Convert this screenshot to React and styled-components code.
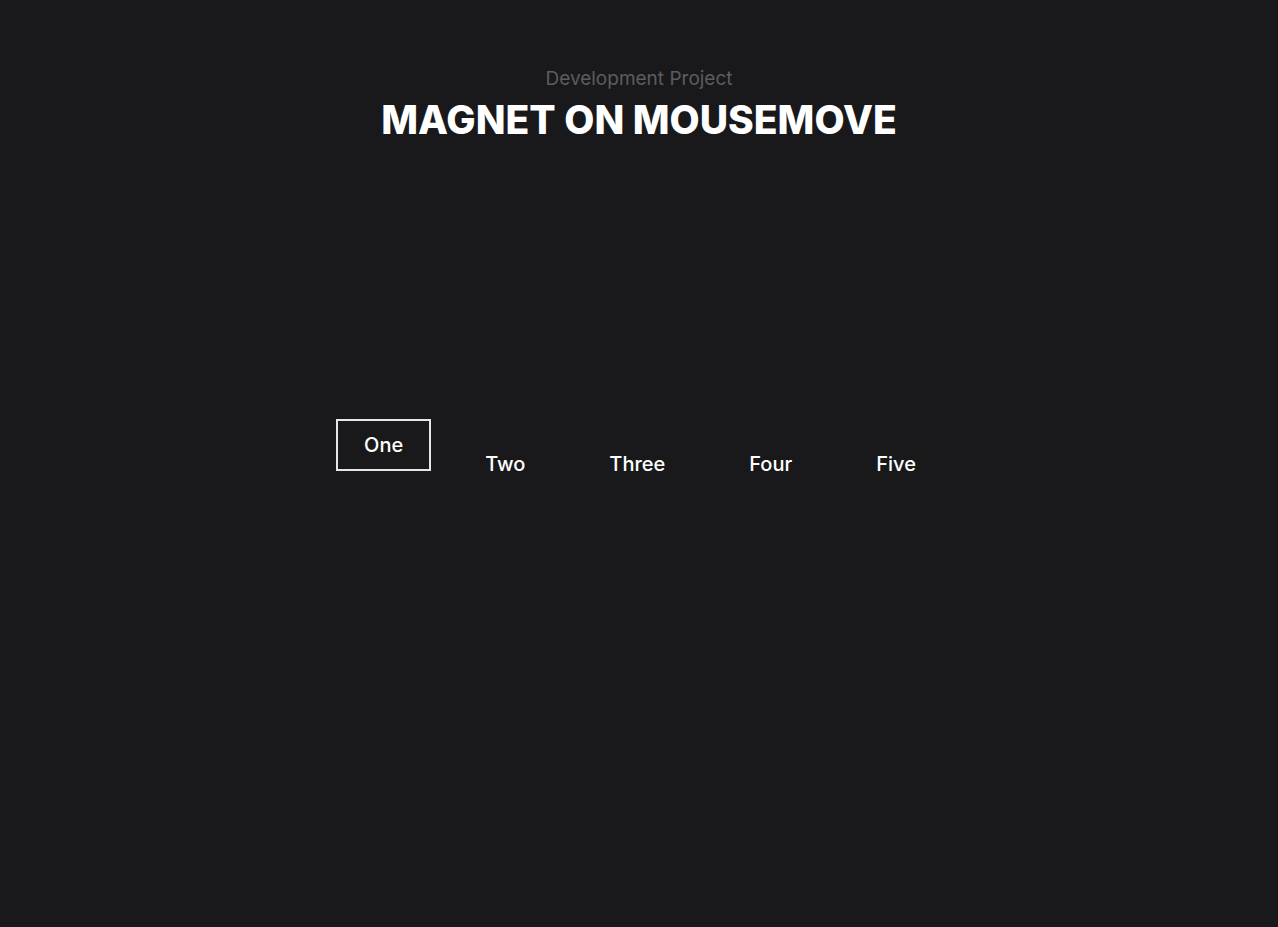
import React from 'react'
import styled, { createGlobalStyle } from 'styled-components'

const GlobalStyle = createGlobalStyle`
  * { box-sizing: border-box; }
  html, body {
    margin: 0;
    padding: 0;
    background: #19191b;
    font-family: Inter, 'Noto Sans', sans-serif;
  }
`

const Page = styled.div`
  position: relative;
  width: 100%;
  height: 927px;
  display: flex;
  flex-direction: column;
  align-items: center;
  justify-content: center;
`

const Header = styled.header`
  position: absolute;
  top: 66px;
  left: 0;
  right: 0;
  display: flex;
  flex-direction: column;
  align-items: center;
`

const Kicker = styled.p`
  margin: 0;
  font-size: 19px;
  line-height: 26px;
  color: #5c5c62;
  font-weight: 400;
`

const Title = styled.h1`
  margin: 4px 0 0;
  font-size: 39px;
  line-height: 48px;
  font-weight: 800;
  color: #ffffff;
  letter-spacing: 0;
`

const Nav = styled.ul`
  list-style: none;
  margin: 0;
  padding: 0;
  display: flex;
  gap: 28px;
`

const Item = styled.li`
  display: block;
`

const NavLink = styled.a`
  display: block;
  padding: 10px 26px;
  font-size: 20px;
  line-height: 28px;
  font-weight: 500;
  color: #ffffff;
  text-decoration: none;
  border: 2px solid ${(props) => (props.$active ? '#e6e6e6' : 'transparent')};
`

const items = ['One', 'Two', 'Three', 'Four', 'Five']

export default function App() {
  return (
    <>
      <GlobalStyle />
      <Page>
        <Header>
          <Kicker>Development Project</Kicker>
          <Title>MAGNET ON MOUSEMOVE</Title>
        </Header>
        <Nav>
          {items.map((label, i) => (
            <Item key={label}>
              <NavLink
                href="#"
                $active={i === 0}
                style={i === 0 ? { transform: 'translate(2px, -19px)' } : undefined}
              >
                {label}
              </NavLink>
            </Item>
          ))}
        </Nav>
      </Page>
    </>
  )
}
